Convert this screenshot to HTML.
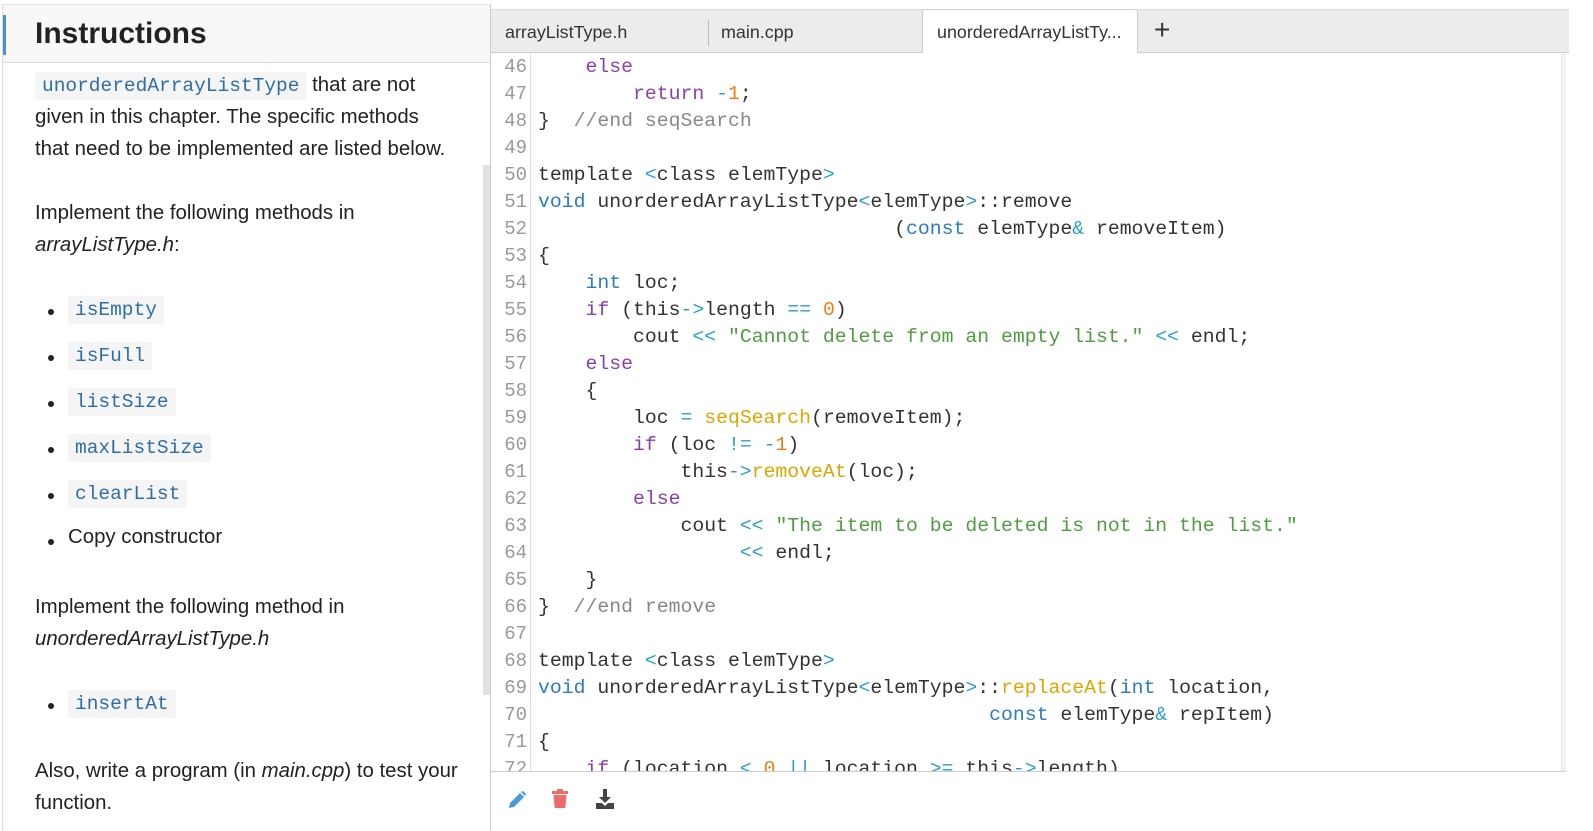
<!DOCTYPE html>
<html><head><meta charset="utf-8"><style>
*{margin:0;padding:0;box-sizing:border-box}
body{width:1593px;height:831px;overflow:hidden;background:#fff;font-family:"Liberation Sans",sans-serif;color:#222;position:relative}
.left{position:absolute;left:2px;top:4px;width:488px;height:827px;border-left:1px solid #ddd;border-top:1px solid #e4e4e4;overflow:hidden}
.hdr{position:absolute;left:0;top:0;width:488px;height:58px;background:#f8f8f8;border-bottom:1px solid #ddd;z-index:2}
.hdr h1{position:absolute;left:32px;top:12px;font-size:30px;font-weight:bold;color:#222}
.accent{position:absolute;left:0;top:10px;width:3px;height:40px;background:#4a90d0;z-index:3}
.t{position:absolute;left:32px;font-size:20.4px;line-height:32px;color:#222;white-space:nowrap}
code{font-family:"Liberation Mono",monospace;font-size:19.5px;color:#2f6ea5;background:#f5f5f5;padding:3px 7px}
.li{position:absolute;left:45px;font-size:20.4px}
.li:before{content:"";position:absolute;left:0;top:9px;width:6px;height:6px;border-radius:50%;background:#222}
.li code,.li span{position:absolute;left:20px;top:-4px;white-space:nowrap}
.lsb{position:absolute;left:480px;top:160px;width:8px;height:530px;background:#e2e2e2}
.right{position:absolute;left:490px;top:4px;width:1078px;height:827px;border-left:1px solid #ccc}
.tabs{position:absolute;left:0;top:5px;width:1078px;height:44px;background:#ececec;border-bottom:1px solid #ccc;border-top:1px solid #ddd}
.tab{position:absolute;top:0;height:43px;font-size:17.9px;line-height:44px;color:#333;padding-left:14px;white-space:nowrap}
.sep{position:absolute;top:10px;width:1px;height:26px;background:#bbb}
.code{position:absolute;left:0;top:50px;width:1075px;height:717px;overflow:hidden;font-family:"Liberation Mono",monospace;font-size:19.8px;white-space:pre}
.gut{position:absolute;left:0;top:0;width:40px;height:717px;border-right:1px solid #ddd;background:#fff}
.ln{position:absolute;right:1039px;color:#999;font-size:19px}
.cl{position:absolute;left:47px;color:#333}
.k{color:#8a3fb0}.b{color:#2b7bc4}.s{color:#4d9e3f}.n{color:#f07e10}.o{color:#2a9fc8}.f{color:#e0a400}.c{color:#888}
.bar{position:absolute;left:0;top:767px;width:1075px;height:60px;border-top:1px solid #ccc;background:#fff}
.rsb{position:absolute;left:1070px;top:0;width:8px;height:717px;background:#f3f3f3;border-left:1px solid #e6e6e6}
</style></head><body>
<div class="left">
<div class="accent"></div>
<div class="hdr"><h1>Instructions</h1></div>
<div class="t" style="top:64px"><code>unorderedArrayListType</code> that are not</div>
<div class="t" style="top:96px">given in this chapter. The specific methods</div>
<div class="t" style="top:128px">that need to be implemented are listed below.</div>
<div class="t" style="top:192px">Implement the following methods in</div>
<div class="t" style="top:224px"><i>arrayListType.h</i>:</div>
<div class="li" style="top:295px"><code>isEmpty</code></div>
<div class="li" style="top:341px"><code>isFull</code></div>
<div class="li" style="top:387px"><code>listSize</code></div>
<div class="li" style="top:433px"><code>maxListSize</code></div>
<div class="li" style="top:479px"><code>clearList</code></div>
<div class="li" style="top:525px"><span style="top:-4px">Copy constructor</span></div>
<div class="t" style="top:586px">Implement the following method in</div>
<div class="t" style="top:618px"><i>unorderedArrayListType.h</i></div>
<div class="li" style="top:689px"><code>insertAt</code></div>
<div class="t" style="top:750px">Also, write a program (in <i>main.cpp</i>) to test your</div>
<div class="t" style="top:782px">function.</div>
<div class="lsb"></div>
</div>
<div class="right">
<div class="tabs">
<div class="tab" style="left:0">arrayListType.h</div>
<div class="sep" style="left:217px"></div>
<div class="tab" style="left:216px">main.cpp</div>
<div class="tab" style="left:431px;width:216px;background:#fff;height:44px;border:1px solid #ccc;border-bottom:none;border-radius:3px 3px 0 0;top:-1px">unorderedArrayListTy...</div>
<div class="tab" style="left:649px;font-size:28px;line-height:40px">+</div>
</div>
<div class="code">
<div class="gut"></div>
<div class="ln" style="top:2px">46</div><div class="cl" style="top:2px">    <span class="k">else</span></div>
<div class="ln" style="top:29px">47</div><div class="cl" style="top:29px">        <span class="k">return</span> <span class="o">-</span><span class="n">1</span>;</div>
<div class="ln" style="top:56px">48</div><div class="cl" style="top:56px">}  <span class="c">//end seqSearch</span></div>
<div class="ln" style="top:83px">49</div>
<div class="ln" style="top:110px">50</div><div class="cl" style="top:110px">template <span class="o">&lt;</span>class elemType<span class="o">&gt;</span></div>
<div class="ln" style="top:137px">51</div><div class="cl" style="top:137px"><span class="b">void</span> unorderedArrayListType<span class="o">&lt;</span>elemType<span class="o">&gt;</span>::remove</div>
<div class="ln" style="top:164px">52</div><div class="cl" style="top:164px">                              (<span class="b">const</span> elemType<span class="o">&amp;</span> removeItem)</div>
<div class="ln" style="top:191px">53</div><div class="cl" style="top:191px">{</div>
<div class="ln" style="top:218px">54</div><div class="cl" style="top:218px">    <span class="b">int</span> loc;</div>
<div class="ln" style="top:245px">55</div><div class="cl" style="top:245px">    <span class="k">if</span> (this<span class="o">-&gt;</span>length <span class="o">==</span> <span class="n">0</span>)</div>
<div class="ln" style="top:272px">56</div><div class="cl" style="top:272px">        cout <span class="o">&lt;&lt;</span> <span class="s">"Cannot delete from an empty list."</span> <span class="o">&lt;&lt;</span> endl;</div>
<div class="ln" style="top:299px">57</div><div class="cl" style="top:299px">    <span class="k">else</span></div>
<div class="ln" style="top:326px">58</div><div class="cl" style="top:326px">    {</div>
<div class="ln" style="top:353px">59</div><div class="cl" style="top:353px">        loc <span class="o">=</span> <span class="f">seqSearch</span>(removeItem);</div>
<div class="ln" style="top:380px">60</div><div class="cl" style="top:380px">        <span class="k">if</span> (loc <span class="o">!=</span> <span class="o">-</span><span class="n">1</span>)</div>
<div class="ln" style="top:407px">61</div><div class="cl" style="top:407px">            this<span class="o">-&gt;</span><span class="f">removeAt</span>(loc);</div>
<div class="ln" style="top:434px">62</div><div class="cl" style="top:434px">        <span class="k">else</span></div>
<div class="ln" style="top:461px">63</div><div class="cl" style="top:461px">            cout <span class="o">&lt;&lt;</span> <span class="s">"The item to be deleted is not in the list."</span></div>
<div class="ln" style="top:488px">64</div><div class="cl" style="top:488px">                 <span class="o">&lt;&lt;</span> endl;</div>
<div class="ln" style="top:515px">65</div><div class="cl" style="top:515px">    }</div>
<div class="ln" style="top:542px">66</div><div class="cl" style="top:542px">}  <span class="c">//end remove</span></div>
<div class="ln" style="top:569px">67</div>
<div class="ln" style="top:596px">68</div><div class="cl" style="top:596px">template <span class="o">&lt;</span>class elemType<span class="o">&gt;</span></div>
<div class="ln" style="top:623px">69</div><div class="cl" style="top:623px"><span class="b">void</span> unorderedArrayListType<span class="o">&lt;</span>elemType<span class="o">&gt;</span>::<span class="f">replaceAt</span>(<span class="b">int</span> location,</div>
<div class="ln" style="top:650px">70</div><div class="cl" style="top:650px">                                      <span class="b">const</span> elemType<span class="o">&amp;</span> repItem)</div>
<div class="ln" style="top:677px">71</div><div class="cl" style="top:677px">{</div>
<div class="ln" style="top:704px">72</div><div class="cl" style="top:704px">    <span class="k">if</span> (location <span class="o">&lt;</span> <span class="n">0</span> <span class="o">||</span> location <span class="o">&gt;=</span> this<span class="o">-&gt;</span>length)</div>
<div class="rsb"></div>
</div>
<div class="bar">
<svg style="position:absolute;left:16px;top:18px" width="20" height="20" viewBox="0 0 20 20"><path d="M2 18l1-5L13 3l4 4L7 17z" fill="#4a9ad8"/><path d="M14 2l2-1 3 3-1 2z" fill="#4a9ad8"/></svg>
<svg style="position:absolute;left:61px;top:17px" width="16" height="20" viewBox="0 0 16 20"><rect x="0" y="2" width="16" height="3" fill="#ee6b6b"/><rect x="5" y="0" width="6" height="3" fill="#ee6b6b"/><path d="M1.5 6h13l-1.2 13H2.7z" fill="#ee6b6b"/></svg>
<svg style="position:absolute;left:105px;top:17px" width="18" height="20" viewBox="0 0 18 20"><path d="M7 0h4v8h4l-6 6-6-6h4z" fill="#444"/><path d="M0 14h6l3 3 3-3h6v6H0z" fill="#444"/></svg>
</div>
</div>
</body></html>
